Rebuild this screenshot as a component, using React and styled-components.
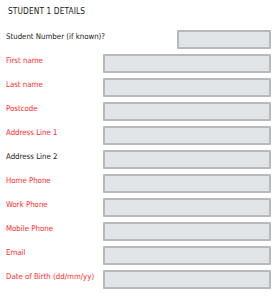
import React from 'react'
import styled, { createGlobalStyle } from 'styled-components';

const Global = createGlobalStyle`
    body {
        margin: 0;
        background: #ffffff;
        font-family: Tahoma, "DejaVu Sans Condensed", "DejaVu Sans", sans-serif;
    }
`
const Form = styled.div`
    width: 280px;
    padding: 6px 9px 0 6px;
    box-sizing: border-box;
`
const Title = styled.h2`
    margin: 0 0 0 2px;
    height: 24px;
    font-size: 8.3px;
    font-weight: normal;
    letter-spacing: 0.1px;
    color: #1a1a1a;
    line-height: 11px;
`
const Rows = styled.div`
    display: flex;
    flex-direction: column;
    gap: 5px;
`
const Row = styled.div`
    display: flex;
    align-items: flex-start;
    justify-content: space-between;
    height: 19px;
`
const Label = styled.label`
    font-size: 7.8px;
    line-height: 10px;
    padding-top: 2px;
    color: ${props => props.required ? '#ff2a2a' : '#222222'};
    white-space: nowrap;
`
const Input = styled.input`
    box-sizing: border-box;
    width: ${props => props.short ? '94px' : '168px'};
    height: 19px;
    margin: 0;
    padding: 0 3px;
    background: #e2e5e8;
    border: 2px solid #b6b8ba;
    border-radius: 1px;
    outline: none;
`

const fields = [
    { label: 'First name', required: true },
    { label: 'Last name', required: true },
    { label: 'Postcode', required: true },
    { label: 'Address Line 1', required: true },
    { label: 'Address Line 2', required: false },
    { label: 'Home Phone', required: true },
    { label: 'Work Phone', required: true },
    { label: 'Mobile Phone', required: true },
    { label: 'Email', required: true },
    { label: 'Date of Birth (dd/mm/yy)', required: true },
]

const App = () => {
    return (
        <Form>
            <Global />
            <Title>STUDENT 1 DETAILS</Title>
            <Rows>
                <Row>
                    <Label>Student Number (if known)?</Label>
                    <Input short />
                </Row>
                {fields.map(f => (
                    <Row key={f.label}>
                        <Label required={f.required}>{f.label}</Label>
                        <Input />
                    </Row>
                ))}
            </Rows>
        </Form>
    )
}

export default App
